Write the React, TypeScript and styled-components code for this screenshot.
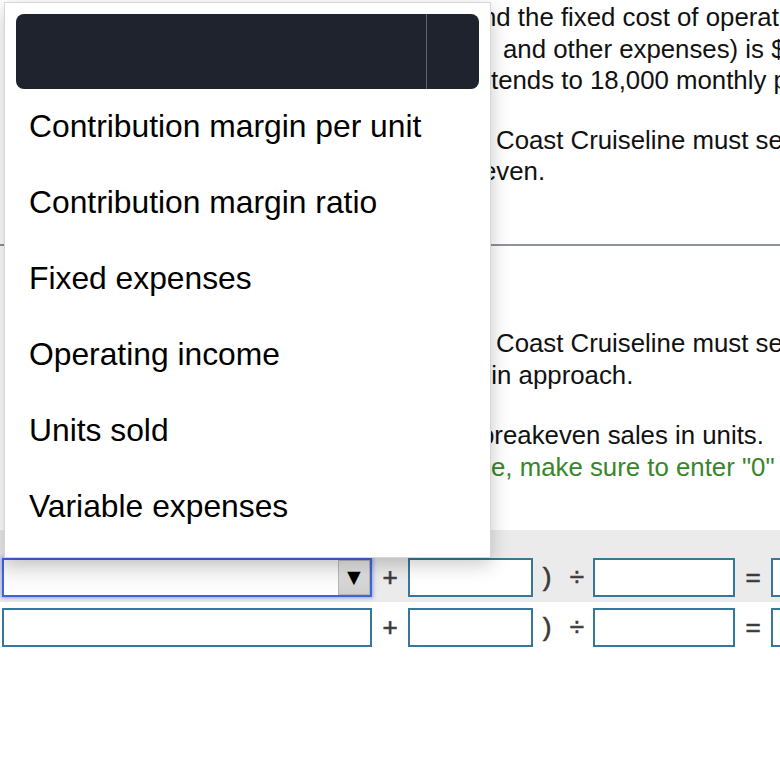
import styled, { createGlobalStyle } from "styled-components"

const Global = createGlobalStyle`
    html, body {
        margin: 0;
        padding: 0;
        background: #ffffff;
    }
    body {
        font-family: "Liberation Sans", Arial, sans-serif;
    }
`

const Page = styled.div`
    position: relative;
    width: 780px;
    height: 778px;
    overflow: hidden;
    color: #111111;
    font-size: 25.8px;
    line-height: 31.5px;
    white-space: nowrap;
`

const Para = styled.div<{ $top: number }>`
    margin-top: ${p => p.$top}px;
`

const Line = styled.div<{ $indent: number; $tone?: "hint" }>`
    padding-left: ${p => p.$indent}px;
    color: ${p => (p.$tone === "hint" ? "#38862a" : "#111111")};
`

const Rule = styled.div`
    margin-top: 56.5px;
    height: 2px;
    background: #8b939f;
`

const Band = styled.div`
    margin-top: 47px;
    padding: 28px 0 5px;
    background: #ebebeb;
`

const Row = styled.div<{ $gap?: number }>`
    display: flex;
    align-items: center;
    padding-left: 2px;
    margin-top: ${p => p.$gap ?? 0}px;
`

const Box = styled.div<{ $w: number }>`
    box-sizing: border-box;
    flex: none;
    width: ${p => p.$w}px;
    height: 39px;
    border: 2px solid #35789a;
    background: #ffffff;
`

const Select = styled.div`
    box-sizing: border-box;
    flex: none;
    width: 370px;
    height: 39px;
    display: flex;
    justify-content: flex-end;
    align-items: stretch;
    border: 2px solid #3f65d3;
    box-shadow: 0 0 4px 1px rgba(70, 100, 225, 0.55);
    background: linear-gradient(#f2f2f2, #ffffff);
`

const Arrow = styled.div`
    box-sizing: border-box;
    width: 32px;
    display: flex;
    align-items: center;
    justify-content: center;
    border: 1px solid #b5b5b5;
    background: linear-gradient(#e2e2e2, #cfcfcf);
    color: #000000;
    font-size: 23px;
`

const Op = styled.span<{ $w: number }>`
    flex: none;
    width: ${p => p.$w}px;
    text-align: center;
    color: #3a3a3a;
    font-size: 26px;
    line-height: 39px;
    -webkit-text-stroke: 0.6px #3a3a3a;
`

const Menu = styled.div`
    position: absolute;
    left: 4px;
    top: 2px;
    width: 487px;
    box-sizing: border-box;
    padding: 11px 11px 12px;
    background: #ffffff;
    border: 1px solid #d6d6d6;
    box-shadow: 0 6px 18px rgba(0, 0, 0, 0.22);
`

const Current = styled.div`
    height: 75px;
    display: flex;
    border-radius: 8px;
    background: #1f232d;
    overflow: hidden;
    .rest {
        flex: 1;
    }
    .tail {
        width: 52px;
        border-left: 1px solid #5e626b;
    }
`

const Item = styled.div`
    height: 76px;
    display: flex;
    align-items: center;
    padding-left: 13px;
    font-size: 31.8px;
    color: #000000;
`

const options = [
    "Contribution margin per unit",
    "Contribution margin ratio",
    "Fixed expenses",
    "Operating income",
    "Units sold",
    "Variable expenses",
]

function Formula({ first }: { first: React.ReactNode }) {
    return <>
        {first}
        <Op $w={36}>+</Op>
        <Box $w={125} />
        <Op $w={28}>)</Op>
        <Op $w={32}>÷</Op>
        <Box $w={142} />
        <Op $w={36}>=</Op>
        <Box $w={120} />
    </>
}

export default function App() {
    return <Page>
        <Global />
        <Para $top={2}>
            <Line $indent={482}>nd the fixed cost of operating the ship</Line>
            <Line $indent={503}>and other expenses) is $</Line>
            <Line $indent={491}>tends to 18,000 monthly passengers</Line>
        </Para>
        <Para $top={28}>
            <Line $indent={496}>Coast Cruiseline must sell</Line>
            <Line $indent={482}>even.</Line>
        </Para>
        <Rule />
        <Para $top={82}>
            <Line $indent={496}>Coast Cruiseline must sell</Line>
            <Line $indent={477}>gin approach.</Line>
        </Para>
        <Para $top={29}>
            <Line $indent={480}>breakeven sales in units.</Line>
            <Line $indent={491} $tone="hint">e, make sure to enter "0"</Line>
        </Para>
        <Band>
            <Row>
                <Formula first={<Select><Arrow>▼</Arrow></Select>} />
            </Row>
        </Band>
        <Row $gap={6}>
            <Formula first={<Box $w={370} />} />
        </Row>
        <Menu>
            <Current>
                <div className="rest"></div>
                <div className="tail"></div>
            </Current>
            {options.map(o => <Item key={o}>{o}</Item>)}
        </Menu>
    </Page>
}
